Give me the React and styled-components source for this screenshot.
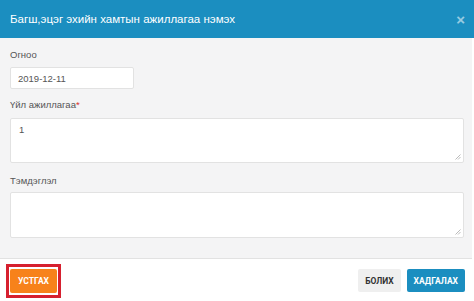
import styled, { createGlobalStyle } from "styled-components"

const GlobalStyle = createGlobalStyle`
    html, body {
        margin: 0;
        padding: 0;
        background: #ffffff;
        font-family: "Liberation Sans", Arial, sans-serif;
    }
`
const Modal = styled.div`
    width: 474px;
    height: 301px;
    display: flex;
    flex-direction: column;
    background: #ffffff;
`
const Header = styled.div`
    height: 38px;
    display: flex;
    align-items: center;
    justify-content: space-between;
    padding: 0 9px 0 10px;
    background: #1b8ec0;
    color: #ffffff;
    box-sizing: border-box;
`
const Title = styled.h4`
    margin: 0;
    font-size: 11.5px;
    font-weight: 400;
`
const Close = styled.span`
    font-size: 15px;
    font-weight: 700;
    opacity: 0.55;
    line-height: 1;
`
const Body = styled.div`
    height: 221px;
    box-sizing: border-box;
    background: #f4f4f5;
    border-bottom: 1px solid #e2e2e2;
    margin-right: 2px;
    padding: 11px 8px 0 10px;
    display: flex;
    flex-direction: column;
`
const Label = styled.label`
    font-size: 9.5px;
    line-height: 12px;
    color: #555;
    margin-bottom: ${props => props.mb || "6px"};
`
const Required = styled.span`
    color: #d9302c;
`
const Input = styled.div`
    width: ${props => props.width || "100%"};
    height: ${props => props.height || "22px"};
    box-sizing: border-box;
    background: #ffffff;
    border: 1px solid #e2e2e2;
    border-radius: 2px;
    padding: ${props => props.pad || "5px 7px"};
    font-size: 9.5px;
    line-height: 11px;
    color: #555;
    position: relative;
    margin-bottom: ${props => props.mb || "10px"};
`
const Grip = styled.svg`
    position: absolute;
    right: 2px;
    bottom: 2px;
`
const Footer = styled.div`
    flex: 1;
    display: flex;
    align-items: center;
    justify-content: space-between;
    padding: 1px 9px 0 6px;
`
const Outline = styled.div`
    border: 3px solid #d6202f;
    padding: 2px 1px;
    display: flex;
`
const Button = styled.button`
    height: ${props => props.h || "23px"};
    padding: 0 ${props => props.px || "7px"};
    border: none;
    border-radius: 2px;
    font-family: Roboto, "Liberation Sans", sans-serif;
    font-weight: 700;
    font-size: 8.5px;
    background: ${props => props.bg};
    color: ${props => props.color || "#fff"};
`
const Right = styled.div`
    display: flex;
    gap: 6px;
`

const Resize = () => (
    <Grip width="7" height="7" viewBox="0 0 7 7">
        <path d="M6.5 1.5 L1.5 6.5 M6.5 4 L4 6.5" stroke="#aaa" strokeWidth="0.8" />
    </Grip>
)

export default function App() {
    return (
        <Modal>
            <GlobalStyle />
            <Header>
                <Title>Багш,эцэг эхийн хамтын ажиллагаа нэмэх</Title>
                <Close>×</Close>
            </Header>
            <Body>
                <Label>Огноо</Label>
                <Input width="124px" height="22px" mb="10px">2019-12-11</Input>
                <Label mb="7px">Үйл ажиллагаа<Required>*</Required></Label>
                <Input height="45px" pad="5px 8px" mb="12px">1<Resize /></Input>
                <Label mb="5px">Тэмдэглэл</Label>
                <Input height="46px" mb="0"><Resize /></Input>
            </Body>
            <Footer>
                <Outline>
                    <Button bg="#f7821b" h="24px" px="8px">УСТГАХ</Button>
                </Outline>
                <Right>
                    <Button bg="#efefef" color="#333">БОЛИХ</Button>
                    <Button bg="#1b8ec0">ХАДГАЛАХ</Button>
                </Right>
            </Footer>
        </Modal>
    )
}
